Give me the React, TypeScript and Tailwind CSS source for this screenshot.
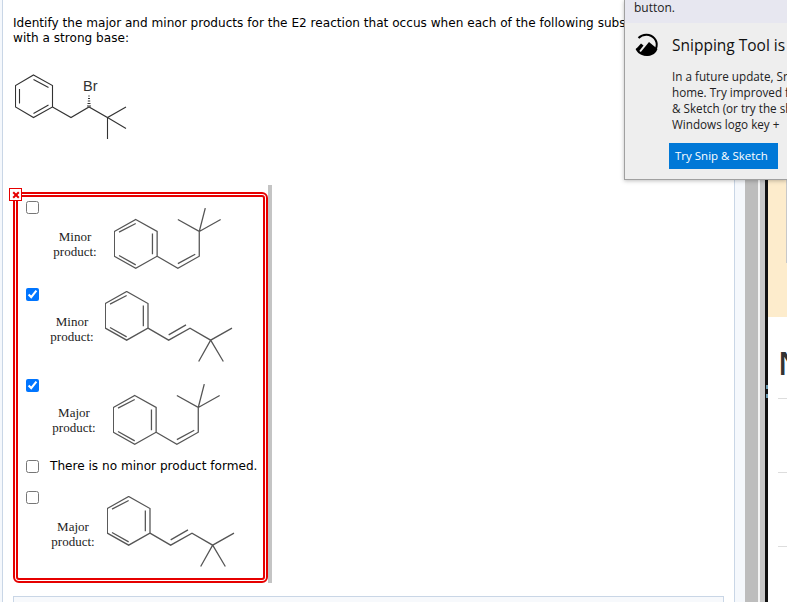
function Benzene() {
  return (
    <>
      <path d="M64 0 L128 36 L128 110 L64 146 L0 110 L0 36 Z" fill="none" />
      <path d="M14 38 L64 12 M114 42 L114 104 M14 108 L64 136" fill="none" />
    </>
  )
}

// Z alkene: ring, then chain turning up into the tert-butyl
function ZProduct() {
  return (
    <svg width="107" height="61" viewBox="0 0 320 182" className="block shrink-0" stroke="#555555" strokeWidth="3.8">
      <g transform="translate(1 34)">
        <Benzene />
      </g>
      <path
        d="M129 144 L191 180 L255 144 L255 70 L191 34 M255 70 L319 34 M255 70 L273 0 M191 166 L243 138"
        fill="none"
      />
    </svg>
  )
}

// E alkene: ring, then zigzag chain with the tert-butyl pointing down
function EProduct() {
  return (
    <svg width="128" height="71" viewBox="0 0 384 212" className="block shrink-0" stroke="#555555" strokeWidth="3.8">
      <g transform="translate(1 1)">
        <Benzene />
      </g>
      <path
        d="M129 111 L191 147 L255 111 L317 147 L381 111 M317 147 L281 211 M317 147 L355 211 M191 131 L243 101"
        fill="none"
      />
    </svg>
  )
}

function Substrate() {
  return (
    <div className="relative w-[113px] h-[66px]">
      <svg width="113" height="66" viewBox="0 0 113 66" className="block" stroke="#333333" strokeWidth="1.1" fill="none">
        <path d="M18.5 1 L37.5 11.5 L37.5 33 L18.5 43.5 L0.5 33 L0.5 11.5 Z" />
        <path d="M18.5 5.5 L33.5 13.5 M4.5 15 L4.5 29.5 M33.5 31 L18.5 39.5" />
        <path d="M37.5 33 L56 43.5 L74 33 L92.5 43.5 L111 33 M92.5 43.5 L111 54.5 M92.5 43.5 L92.5 65" />
        <path d="M72 32 L76 32 M72.5 29.5 L75.5 29.5 M72.8 27 L75.2 27 M73 24.5 L75 24.5 M73.3 22 L74.7 22" />
      </svg>
      <span className="absolute left-[68px] top-[4px] font-['Liberation_Sans',sans-serif] text-[14.5px] leading-4 text-[#333]">
        Br
      </span>
    </div>
  )
}

function Label({ top, bottom }: { top: string; bottom: string }) {
  return (
    <div className="w-[56px] shrink-0 text-center font-['Liberation_Serif',serif] text-[13px] leading-[15px] text-[#222]">
      {top}
      <br />
      {bottom}
    </div>
  )
}

export default function App() {
  return (
    <div className="relative flex w-[787px] h-[602px] overflow-hidden bg-white font-['DejaVu_Sans',sans-serif] text-black">
      <div className="w-[2px] shrink-0 bg-[#f5f8fc]" />

      <main className="w-[733px] shrink-0 border-x border-[#c9d6e6] pl-[10px] pr-[10px] pt-[16px]">
        <p className="whitespace-nowrap text-[12.1px] leading-[15px]">
          Identify the major and minor products for the E2 reaction that occus when each of the following substrates
          reacts
          <br />
          with a strong base:
        </p>

        <div className="mt-[28px] ml-[2px]">
          <Substrate />
        </div>

        <div className="relative mt-[45px] w-[259px] h-[398px]">
          <div className="absolute right-0 top-0 bottom-0 w-[4px] bg-[#c4c4c4]" />
          <div className="absolute left-0 right-[4px] top-[7px] h-[391px] rounded-[6px] border-[5px] border-double border-[#e60000] bg-white pl-[8px] pt-[4px]">
            <div className="flex flex-col">
              <input type="checkbox" readOnly className="block w-[13px] h-[13px] m-0" />
              <div className="flex items-start ml-[21px] mt-[-6px]">
                <div className="mt-[21px]">
                  <Label top="Minor" bottom="product:" />
                </div>
                <div className="ml-[11px]">
                  <ZProduct />
                </div>
              </div>

              <input type="checkbox" checked readOnly className="block w-[13px] h-[13px] m-0 mt-[19px]" />
              <div className="flex items-start ml-[18px] mt-[-10px]">
                <div className="mt-[23px]">
                  <Label top="Minor" bottom="product:" />
                </div>
                <div className="ml-[5px]">
                  <EProduct />
                </div>
              </div>

              <input type="checkbox" checked readOnly className="block w-[13px] h-[13px] m-0 mt-[17px]" />
              <div className="flex items-start ml-[20px] mt-[-8px]">
                <div className="mt-[21px]">
                  <Label top="Major" bottom="product:" />
                </div>
                <div className="ml-[11px]">
                  <ZProduct />
                </div>
              </div>

              <label className="flex items-center gap-[11px] mt-[14px] h-[14px] whitespace-nowrap text-[12.1px]">
                <input type="checkbox" readOnly className="block w-[13px] h-[13px] m-0" />
                There is no minor product formed.
              </label>

              <input type="checkbox" readOnly className="block w-[13px] h-[13px] m-0 mt-[18px]" />
              <div className="flex items-start ml-[19px] mt-[-8px]">
                <div className="mt-[23px]">
                  <Label top="Major" bottom="product:" />
                </div>
                <div className="ml-[6px]">
                  <EProduct />
                </div>
              </div>
            </div>
          </div>
          <div className="absolute left-[-4px] top-[3px] flex items-center justify-center w-[13px] h-[13px] border-[1.5px] border-[#e60000] bg-white">
            <svg width="8" height="8" viewBox="0 0 8 8" stroke="#e60000" strokeWidth="2">
              <path d="M1.2 1.2 L6.8 6.8 M6.8 1.2 L1.2 6.8" />
            </svg>
          </div>
        </div>

        <div className="mt-[13px] h-[40px] w-[711px] border border-[#c9d6e6] bg-[#f7f9fc]" />
      </main>

      <div className="w-[10px] shrink-0 bg-[#f5f8fc]" />
      <div className="w-[13px] shrink-0 bg-[#bdbdbd]" />
      <div className="w-[2px] shrink-0 bg-[#f4f4f4]" />
      <div className="w-[5px] shrink-0 bg-[#c8c8c8]" />
      <div className="relative w-[3px] shrink-0 bg-[#111111]">
        <div className="absolute left-[1px] right-0 top-[385px] h-[4px] bg-[#6b9ab0]" />
        <div className="absolute left-[1px] right-0 top-[394px] h-[4px] bg-[#6b9ab0]" />
      </div>

      <aside className="flex-1 min-w-0">
        <div className="relative h-[317px] bg-[#fdeccc]">
          <div className="absolute right-0 top-[180px] h-[83px] w-px bg-[#c8c8c8]" />
        </div>
        <div className="h-[81px] overflow-hidden pt-[26px] pl-[10px] text-[32px] leading-[40px] font-['Open_Sans',sans-serif] font-semibold text-[#333]">
          N
        </div>
        <div className="h-px bg-[#dddddd] ml-[10px]" />
        <div className="mt-[73px] h-px bg-[#dddddd] ml-[10px]" />
        <div className="mt-[73px] h-px bg-[#dddddd] ml-[10px]" />
      </aside>

      <div className="absolute right-0 top-0 w-[163px] h-[180px] overflow-hidden border-l border-b border-[#a0a0a0] bg-[#eeeeee] font-['Open_Sans',sans-serif] shadow-[0_1px_4px_rgba(0,0,0,0.25)]">
        <div className="h-[23px] bg-[#e7e7f0] pl-[9px] text-[12px] leading-[15px] text-[#222]">button.</div>
        <div className="flex items-center whitespace-nowrap pl-[10px] pt-[10px]">
          <svg width="24" height="24" viewBox="0 0 24 24" className="shrink-0">
            <path d="M3.5 5 A10.5 10 0 1 1 1.5 15.5" fill="none" stroke="#000" strokeWidth="2" />
            <path d="M14 9 L22.5 16 A11 10 0 0 1 12 23 A11 10 0 0 1 5 20 Z" fill="#000" />
            <path d="M1 16 L6 10.5 L8.5 12.5 L3.5 19 Z" fill="#000" />
          </svg>
          <span className="ml-[13px] text-[15.5px] leading-[22px] text-[#111]">Snipping Tool is</span>
        </div>
        <div className="mt-[11px] ml-[47px] whitespace-nowrap text-[11.7px] leading-4 text-[#222]">
          In a future update, Snipping
          <br />
          home. Try improved features
          <br />
          &amp; Sketch (or try the shortcut
          <br />
          Windows logo key +
        </div>
        <div className="mt-[11px] ml-[44px] flex items-center pl-[6px] w-[109px] h-[26px] bg-[#0078d7] text-[11.5px] text-white">
          Try Snip &amp; Sketch
        </div>
      </div>
    </div>
  )
}
